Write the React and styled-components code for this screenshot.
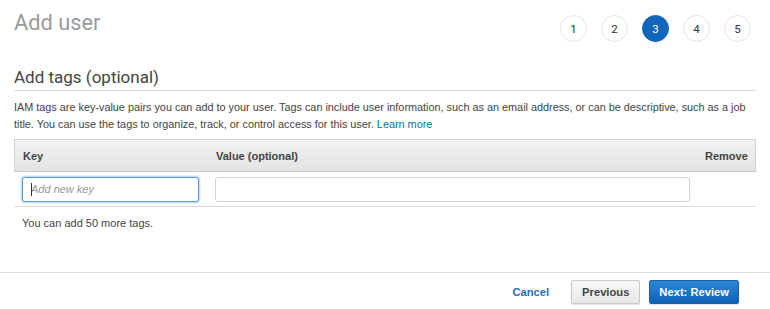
import React from "react";
import styled, { createGlobalStyle } from "styled-components";

const Global = createGlobalStyle`
  html, body { margin: 0; padding: 0; background: #fff; }
  body { font-family: "Liberation Sans", Arial, sans-serif; color: #444; }
  * { box-sizing: border-box; }
`;

const Page = styled.div`
  width: 770px;
  height: 309px;
  display: flex;
  flex-direction: column;
  overflow: hidden;
`;

const Main = styled.div`
  padding: 0 14px;
  flex: 1;
`;

const TopBar = styled.div`
  display: flex;
  justify-content: space-between;
  align-items: flex-start;
  height: 56px;
`;

const Title = styled.h1`
  margin: 0;
  padding-top: 10px;
  font-family: Roboto, "Liberation Sans", sans-serif;
  font-weight: 400;
  font-size: 21.8px;
  line-height: 26px;
  color: #9a9a9a;
`;

const Steps = styled.div`
  display: flex;
  gap: 14px;
  margin-top: 15px;
  margin-right: 5px;
`;

const Step = styled.div`
  width: 27px;
  height: 27px;
  border-radius: 50%;
  display: flex;
  align-items: center;
  justify-content: center;
  font-family: Roboto, "Liberation Sans", sans-serif;
  font-size: 11.5px;
  color: ${(p) => (p.$active ? "#fff" : "#333")};
  background: ${(p) => (p.$active ? "#1166bb" : "#fff")};
  border: 1px solid ${(p) => (p.$active ? "#1166bb" : "#e4e4e4")};
`;

const SectionTitle = styled.h2`
  margin: 0;
  font-family: Roboto, "Liberation Sans", sans-serif;
  font-weight: 400;
  font-size: 17px;
  line-height: 22px;
  color: #444;
  padding-top: 10px;
  padding-bottom: 2px;
  border-bottom: 1px solid #dcdcdc;
`;

const Text = styled.p`
  margin: 8px 0 0;
  font-size: 10.85px;
  line-height: 17px;
  color: #444;
`;

const Link = styled.a`
  color: #0073bb;
  text-decoration: none;
`;

const Table = styled.div`
  margin-top: 6px;
`;

const HeadRow = styled.div`
  display: grid;
  grid-template-columns: 193px 1fr 58px;
  align-items: center;
  height: 33px;
  background: linear-gradient(#f2f2f2, #e3e3e3);
  border: 1px solid #d2d2d2;
  border-bottom-color: #c8c8c8;
`;

const HeadCell = styled.div`
  padding: 0 8px;
  font-size: 11px;
  font-weight: 700;
  color: #444;
  white-space: nowrap;
  text-align: ${(p) => (p.$right ? "right" : "left")};
`;

const BodyRow = styled.div`
  display: grid;
  grid-template-columns: 193px 1fr 58px;
  align-items: center;
  height: 35px;
  border-bottom: 1px solid #dcdcdc;
`;

const Cell = styled.div`
  padding: 0 8px;
  display: flex;
`;

const Input = styled.input`
  width: 100%;
  height: 25px;
  border: 1px solid ${(p) => (p.$focus ? "#5d9be0" : "#d2d2d2")};
  border-radius: 3px;
  box-shadow: ${(p) => (p.$focus ? "0 0 2px 1px rgba(93,155,224,0.45)" : "none")};
  padding: 0 8px;
  font-family: "Liberation Sans", Arial, sans-serif;
  font-size: 11px;
  font-style: italic;
  color: #444;
  outline: none;
  &::placeholder { color: #999; font-style: italic; }
`;

const Caret = styled.span`
  position: absolute;
  left: 9px;
  top: 6px;
  width: 1px;
  height: 13px;
  background: #333;
`;

const InputWrap = styled.div`
  position: relative;
  width: 100%;
  display: flex;
`;

const Note = styled.div`
  padding: 8px 8px 0;
  font-size: 11px;
  line-height: 17px;
  color: #444;
`;

const Footer = styled.div`
  border-top: 1px solid #dcdcdc;
  height: 37px;
  display: flex;
  justify-content: flex-end;
  align-items: flex-start;
  padding: 7px 31px 0 0;
  gap: 9px;
`;

const CancelBtn = styled.button`
  background: none;
  border: none;
  color: #1f6fc5;
  font-family: "Liberation Sans", Arial, sans-serif;
  font-weight: 700;
  font-size: 11.2px;
  height: 24px;
  padding: 0 10px;
  margin-right: 3px;
`;

const Button = styled.button`
  height: 24px;
  padding: 0 ${(p) => (p.$primary ? "9px" : "10px")};
  border-radius: 2px;
  font-family: "Liberation Sans", Arial, sans-serif;
  font-weight: 700;
  font-size: 11.2px;
  color: ${(p) => (p.$primary ? "#fff" : "#444")};
  background: ${(p) =>
    p.$primary ? "linear-gradient(#2b87d8, #0e62b5)" : "linear-gradient(#f8f8f8, #e6e7e9)"};
  border: 1px solid ${(p) => (p.$primary ? "#1a5fa6" : "#c9c9c9")};
  box-shadow: 0 1px 1px rgba(0, 0, 0, 0.12);
`;

export default function App() {
  return (
    <Page>
      <Global />
      <Main>
        <TopBar>
          <Title>Add user</Title>
          <Steps>
            {[1, 2, 3, 4, 5].map((n) => (
              <Step key={n} $active={n === 3}>{n}</Step>
            ))}
          </Steps>
        </TopBar>
        <SectionTitle>Add tags (optional)</SectionTitle>
        <Text>
          IAM tags are key-value pairs you can add to your user. Tags can include user information, such as an email
          address, or can be descriptive, such as a job title. You can use the tags to organize, track, or control
          access for this user. <Link href="#">Learn more</Link>
        </Text>
        <Table>
          <HeadRow>
            <HeadCell>Key</HeadCell>
            <HeadCell>Value (optional)</HeadCell>
            <HeadCell $right>Remove</HeadCell>
          </HeadRow>
          <BodyRow>
            <Cell>
              <InputWrap>
                <Input $focus placeholder="Add new key" />
                <Caret />
              </InputWrap>
            </Cell>
            <Cell>
              <Input />
            </Cell>
            <Cell />
          </BodyRow>
        </Table>
        <Note>You can add 50 more tags.</Note>
      </Main>
      <Footer>
        <CancelBtn>Cancel</CancelBtn>
        <Button>Previous</Button>
        <Button $primary>Next: Review</Button>
      </Footer>
    </Page>
  );
}
